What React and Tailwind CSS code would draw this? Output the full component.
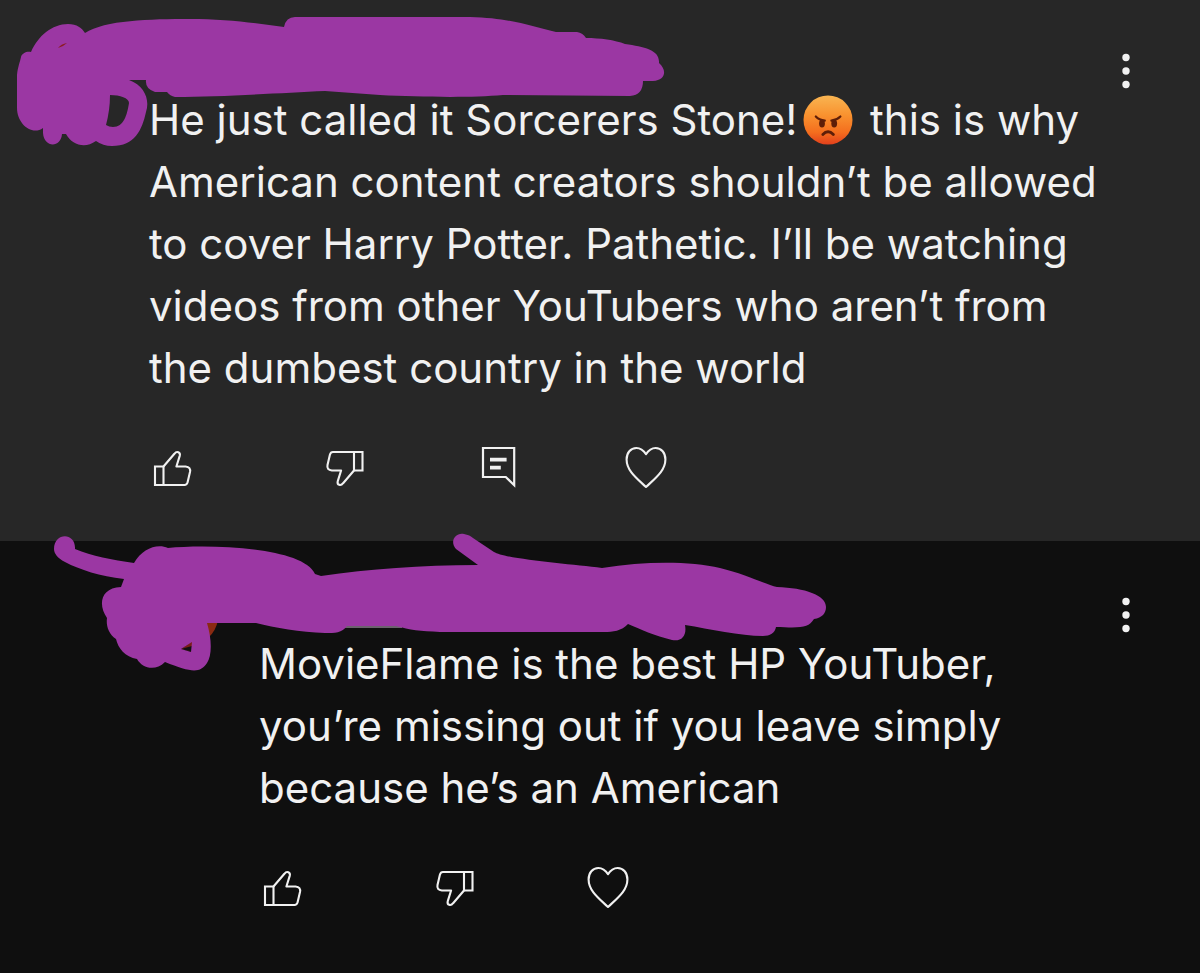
import React from 'react';
import clsx from 'clsx';

const LikeIcon = () => (
    <svg viewBox="-1 0 44 44" className="w-11 h-11" fill="none" stroke="currentColor" strokeWidth="2.1" strokeLinejoin="round">
        <path d="M5 20.5H13.5V39H5Z" strokeLinejoin="miter" />
        <path d="M13.5 20.5L24.4 7.8C26.8 4.6 30.6 6.2 29.8 9.6L26.4 20.5H35.6Q41 21 40 26L37.6 36.3Q36.8 39 34.6 39H13.5" />
    </svg>
);

const DislikeIcon = () => (
    <svg viewBox="-1 0 44 44" className="w-11 h-11" fill="none" stroke="currentColor" strokeWidth="2.1" strokeLinejoin="round">
        <path d="M40.5 24.5H32V6H40.5Z" strokeLinejoin="miter" />
        <path d="M32 24.5L21.1 37.2C18.7 40.4 14.9 38.8 15.7 35.4L19.1 24.5H9.9Q4.5 24 5.5 19L7.9 8.7Q8.7 6 10.9 6H32" />
    </svg>
);

const ReplyIcon = () => (
    <svg viewBox="-1 0 44 44" className="w-11 h-11" fill="none" stroke="currentColor" strokeWidth="2.2">
        <path d="M7 2H38.2V39.2L29.8 31H7Z" />
        <path d="M14 13.6H30.6M14 21.6H24.8" strokeWidth="3.8" />
    </svg>
);

const HeartIcon = () => (
    <svg viewBox="-1 0 44 44" className="w-11 h-11" fill="none" stroke="currentColor" strokeWidth="2.1" strokeLinejoin="round">
        <path d="M22 8.2C19 3.6 15.6 2 12.4 2C6.6 2 2.6 7 2.6 13.4C2.6 24.5 12.5 32 22 41C31.5 32 41.4 24.5 41.4 13.4C41.4 7 37.4 2 31.6 2C28.4 2 25 3.6 22 8.2Z" />
    </svg>
);

const AngryFace = () => (
    <svg viewBox="0 0 50 50" role="img" aria-label="angry face" className="inline-block w-[50px] h-[50px] ml-1.5 mr-[5px] align-[-10px]">
        <defs>
            <linearGradient id="face" x1="0" y1="0" x2="0" y2="1">
                <stop offset="0" stopColor="#f9b552" />
                <stop offset="0.4" stopColor="#f9922f" />
                <stop offset="0.75" stopColor="#f46e1e" />
                <stop offset="1" stopColor="#e2401c" />
            </linearGradient>
        </defs>
        <circle cx="25" cy="25" r="24.5" fill="url(#face)" />
        <g fill="#5e1e08">
            <ellipse cx="19" cy="28.5" rx="2.9" ry="4" />
            <ellipse cx="31.2" cy="28.5" rx="2.9" ry="4" />
        </g>
        <g fill="none" stroke="#5e1e08" strokeWidth="2.2" strokeLinecap="round">
            <path d="M12.8 21.5Q16 25 21.8 25.6M37.4 21.5Q34 25 28.4 25.6" />
            <path d="M19.8 39.5Q25 34 30.4 39.5" strokeWidth="2.8" />
        </g>
    </svg>
);

const HeaderScribble = () => (
    <svg viewBox="0 0 680 150" aria-hidden="true" className="absolute left-0 top-0 w-[680px] h-[150px] pointer-events-none">
        <path
            fill="#9b37a3"
            fillRule="evenodd"
            d="M31 52C38 36 52 24 68 24C77 24 82 28 85 33C105 20 150 19 190 19C225 19 255 23 284 27Q286 17 295 17H470C510 18 530 26 556 32H577Q583 33 586 38C600 38 615 40 625 44C645 47 660 50 659 63C667 70 666 80 653 81H643Q643 95 630 96L503 95C470 98 420 97 380 95L325 91C280 93 220 97 175 97Q170 96 167 92H155Q145 89 146 80H129C145 86 150 100 146 112C142 130 135 146 112 146Q103 146 96 141C85 149 72 145 66 134L62 134C61 148 44 148 43 133V128C32 136 17 124 17 108V75C18 66 20 62 21 57C22 53 27 51 31 52ZM110 95C120 95 129 98 129 103C127 115 124 127 113 127Q109 127 106 125Q110 110 110 95Z"
        />
        <path fill="#8c1c22" d="M58 48Q61 44 67 43Q64 46 58 48Z" />
    </svg>
);

const ReplyScribble = () => (
    <svg viewBox="50 530 780 145" aria-hidden="true" className="absolute left-[50px] -top-[11px] w-[780px] h-[145px] pointer-events-none">
        <path fill="#7b1d18" d="M181 649L194 640V652Z" />
        <path fill="#111" d="M181 649L194 652L192 646Z" />
        <path fill="#8a2a12" d="M200 620H218Q216 631 208 638Z" />
        <path stroke="#8d7f8f" strokeWidth="1.5" d="M344 627H402" />
        <path
            fill="#9b37a3"
            fillRule="evenodd"
            d="M54 549C54 532 76 532 75 549C92 556 112 560 134 563C142 549 157 543 168 548C210 544 303 547 315 574L321 576C370 569 420 565 478 565L456 549C449 541 456 532 464 534Q470 535 473 538L494 552C505 559 570 564 602 568C645 561 690 561 720 568C745 574 765 584 777 587C805 588 826 595 826 607C826 613 822 618 814 619C808 628 802 628 776 627C775 633 770 636 763 636C740 636 710 629 685 625C687 635 682 642 672 640C655 636 640 629 628 624C622 631 612 632 605 632H440C420 631 410 630 396 626H347C342 633 335 633 325 633C300 632 275 628 256 623H207C212 640 212 655 207 663C200 674 190 672 165 662C155 672 142 668 137 659C125 657 118 648 116 639C108 634 106 625 107 618C98 605 100 588 121 587L124 579C100 576 80 570 65 562C57 558 54 553 54 549ZM181 649L192 642L191 652Z"
        />
    </svg>
);

const MenuButton = () => (
    <button type="button" aria-label="More options" className="w-11 h-11">
        <svg viewBox="0 0 44 44" className="w-11 h-11" fill="currentColor">
            <circle cx="22" cy="6.5" r="3.7" />
            <circle cx="22" cy="20" r="3.7" />
            <circle cx="22" cy="33.5" r="3.7" />
        </svg>
    </button>
);

const Comment = ({ children, scribble, isReply }) => (
    <article className={clsx('relative', isReply ? 'grow bg-[#0f0f0f] pt-[3px] pl-[259px] pb-12' : 'bg-[#272727] pl-[149px] pb-[51px]')}>
        {scribble}

        <header className="flex justify-end h-[89px] pt-[51px] pr-[52px]">
            <MenuButton />
        </header>

        <p className="pr-[88px] text-[42px] leading-[62px]">{children}</p>

        {/* Actions */}
        <div className="flex mt-[47px]">
            <button type="button" aria-label="Like" className="mr-32">
                <LikeIcon />
            </button>
            <button type="button" aria-label="Dislike" className="mr-[110px]">
                <DislikeIcon />
            </button>
            {!isReply && (
                <button type="button" aria-label="Reply" className="mr-[104px]">
                    <ReplyIcon />
                </button>
            )}
            <button type="button" aria-label="Heart">
                <HeartIcon />
            </button>
        </div>
    </article>
);

const App = () => {
    return (
        <main className="flex flex-col min-h-screen bg-[#0f0f0f] text-[#f1f1f1] font-[Inter,sans-serif]">
            <Comment scribble={<HeaderScribble />}>
                He just called it Sorcerers Stone!<AngryFace /> this is why American content creators shouldn’t be
                allowed to cover Harry Potter. Pathetic. I’ll be watching videos from other YouTubers who aren’t from
                the dumbest country in the world
            </Comment>
            <Comment scribble={<ReplyScribble />} isReply>
                MovieFlame is the best HP YouTuber, you’re missing out if you leave simply because he’s an American
            </Comment>
        </main>
    );
};

export default App;
